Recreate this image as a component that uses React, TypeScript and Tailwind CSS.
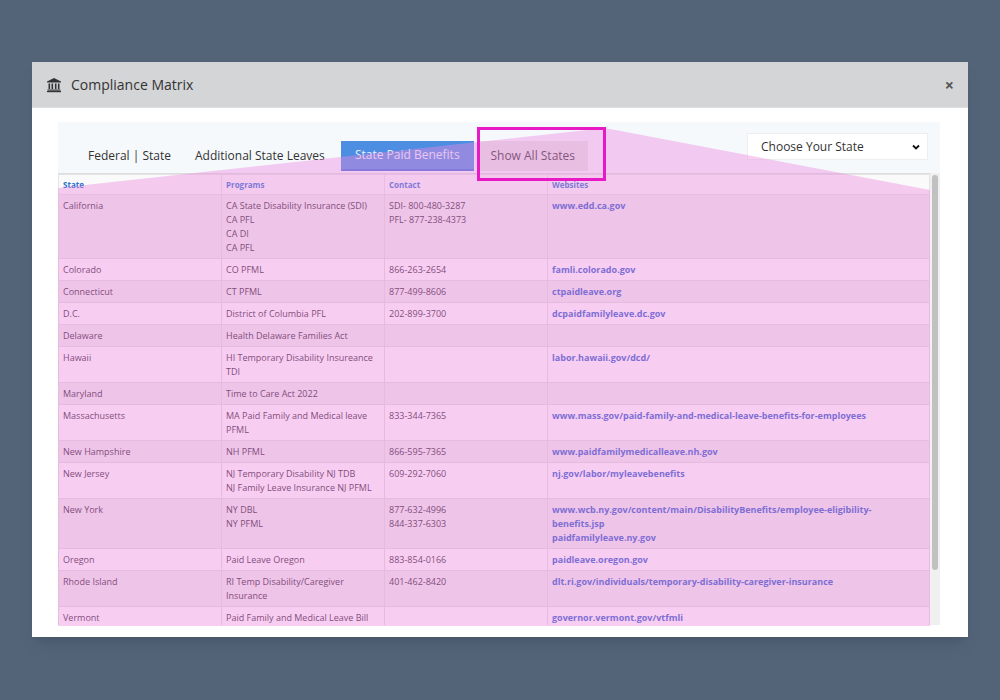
import React from "react";

const rows: [string, string[], string[], string[]][] = [
  ["California", ["CA State Disability Insurance (SDI)", "CA PFL", "CA DI", "CA PFL"], ["SDI- 800-480-3287", "PFL- 877-238-4373"], ["www.edd.ca.gov"]],
  ["Colorado", ["CO PFML"], ["866-263-2654"], ["famli.colorado.gov"]],
  ["Connecticut", ["CT PFML"], ["877-499-8606"], ["ctpaidleave.org"]],
  ["D.C.", ["District of Columbia PFL"], ["202-899-3700"], ["dcpaidfamilyleave.dc.gov"]],
  ["Delaware", ["Health Delaware Families Act"], [], []],
  ["Hawaii", ["HI Temporary Disability Insureance", "TDI"], [], ["labor.hawaii.gov/dcd/"]],
  ["Maryland", ["Time to Care Act 2022"], [], []],
  ["Massachusetts", ["MA Paid Family and Medical leave", "PFML"], ["833-344-7365"], ["www.mass.gov/paid-family-and-medical-leave-benefits-for-employees"]],
  ["New Hampshire", ["NH PFML"], ["866-595-7365"], ["www.paidfamilymedicalleave.nh.gov"]],
  ["New Jersey", ["NJ Temporary Disability NJ TDB", "NJ Family Leave Insurance NJ PFML"], ["609-292-7060"], ["nj.gov/labor/myleavebenefits"]],
  ["New York", ["NY DBL", "NY PFML"], ["877-632-4996", "844-337-6303"], ["www.wcb.ny.gov/content/main/DisabilityBenefits/employee-eligibility-", "benefits.jsp", "paidfamilyleave.ny.gov"]],
  ["Oregon", ["Paid Leave Oregon"], ["883-854-0166"], ["paidleave.oregon.gov"]],
  ["Rhode Island", ["RI Temp Disability/Caregiver", "Insurance"], ["401-462-8420"], ["dlt.ri.gov/individuals/temporary-disability-caregiver-insurance"]],
  ["Vermont", ["Paid Family and Medical Leave Bill"], [], ["governor.vermont.gov/vtfmli"]],
];

const Lines = ({ l, link }: { l: string[]; link?: boolean }) => (
  <div className={link ? "font-bold text-[#2a5ccc]" : "text-[#2e2430]"}>
    {l.map((s, i) => (
      <div key={i} className="whitespace-nowrap">{s}</div>
    ))}
  </div>
);

export default function App() {
  return (
    <div className="w-[1000px] h-[700px] bg-[#536479] relative overflow-hidden" style={{ fontFamily: '"Open Sans", "Noto Sans", sans-serif' }}>
      <div className="absolute left-[32px] top-[62px] w-[936px] h-[575px] bg-white shadow-lg flex flex-col">
        <div className="h-[46px] bg-[#d4d5d7] flex items-center px-[14px] border-b border-[#e0e0e0]">
          <svg width="16" height="16" viewBox="0 0 16 16" className="mr-[9px]">
            <path d="M8 1 L15 4.5 V5.5 H1 V4.5 Z" fill="#333" />
            <rect x="2.5" y="6.5" width="1.6" height="5.5" fill="#333" />
            <rect x="5.5" y="6.5" width="1.6" height="5.5" fill="#333" />
            <rect x="8.9" y="6.5" width="1.6" height="5.5" fill="#333" />
            <rect x="11.9" y="6.5" width="1.6" height="5.5" fill="#333" />
            <rect x="1.5" y="12.5" width="13" height="1.2" fill="#333" />
            <rect x="1" y="14" width="14" height="1.2" fill="#333" />
          </svg>
          <span className="text-[14px] text-[#333]">Compliance Matrix</span>
          <span className="ml-auto text-[16px] font-bold text-[#555]">×</span>
        </div>
        <div className="flex-1 px-[26px] pt-[14px]">
          <div className="bg-[#f5f9fc] w-[882px] h-[503px] flex flex-col">
            <div className="flex items-start h-[51px] pt-[19px] pl-[18px] pr-[12px]">
              <div className="text-[12px] text-[#333] px-[12px] h-[30px] flex items-center whitespace-nowrap">Federal | State</div>
              <div className="text-[12px] text-[#333] px-[12px] h-[30px] flex items-center whitespace-nowrap">Additional State Leaves</div>
              <div className="text-[12px] text-[#e8f0ff] bg-[#4d8ee2] border-b-2 border-[#3b6fd8] h-[30px] flex items-center ml-[4px] w-[133px] justify-center whitespace-nowrap">State Paid Benefits</div>
              <div className="text-[12px] text-[#333] bg-[#e6e6e6] h-[30px] flex items-center ml-[4px] w-[110px] justify-center whitespace-nowrap">Show All States</div>
              <div className="ml-auto -mt-[8px] w-[181px] h-[27px] bg-white border border-[#eee] flex items-center pl-[13px] pr-[6px] text-[12px] text-[#333]">
                Choose Your State
                <svg className="ml-auto" width="10" height="10" viewBox="0 0 10 10"><path d="M2 3.5 L5 6.5 L8 3.5" stroke="#111" strokeWidth="1.8" fill="none" /></svg>
              </div>
            </div>
            <div className="flex flex-1 min-h-0">
              <div className="w-[872px] overflow-hidden bg-white border-t border-[#ddd]">
                <table className="w-full border-collapse text-[9px] leading-[14px] table-fixed">
                  <thead>
                    <tr className="bg-[#fafafa] h-[20px]">
                      {["State", "Programs", "Contact", "Websites"].map((h, i) => (
                        <th key={h} className={`text-left font-bold text-[#2a6fd0] text-[8px] px-[4px] border border-[#e4e4e4] ${i < 3 ? "w-[163px]" : ""}`}>{h}</th>
                      ))}
                    </tr>
                  </thead>
                  <tbody>
                    {rows.map((r, i) => (
                      <tr key={r[0]} className={i % 2 === 0 ? "bg-[#efefef]" : "bg-white"}>
                        <td className="align-top px-[4px] pt-[4px] pb-[3px] border border-[#e0e0e0] text-[#2e2430] whitespace-nowrap">{r[0]}</td>
                        <td className="align-top px-[4px] pt-[4px] pb-[3px] border border-[#e0e0e0]"><Lines l={r[1]} /></td>
                        <td className="align-top px-[4px] pt-[4px] pb-[3px] border border-[#e0e0e0]"><Lines l={r[2]} /></td>
                        <td className="align-top px-[4px] pt-[4px] pb-[3px] border border-[#e0e0e0]"><Lines l={r[3]} link /></td>
                      </tr>
                    ))}
                  </tbody>
                </table>
              </div>
              <div className="w-[10px] bg-[#f0f0f0] pt-[2px] flex justify-center">
                <div className="w-[6px] h-[395px] bg-[#c1c1c1] rounded-full" />
              </div>
            </div>
          </div>
        </div>
      </div>
      <svg className="absolute left-0 top-0 pointer-events-none" width="1000" height="700">
        <polygon points="58,188 605,128 930,190 930,626 58,626" fill="#ee88e0" fillOpacity="0.42" />
        <rect x="478.5" y="128.5" width="126" height="51" fill="none" stroke="#e81ac6" strokeWidth="3" />
      </svg>
    </div>
  );
}
